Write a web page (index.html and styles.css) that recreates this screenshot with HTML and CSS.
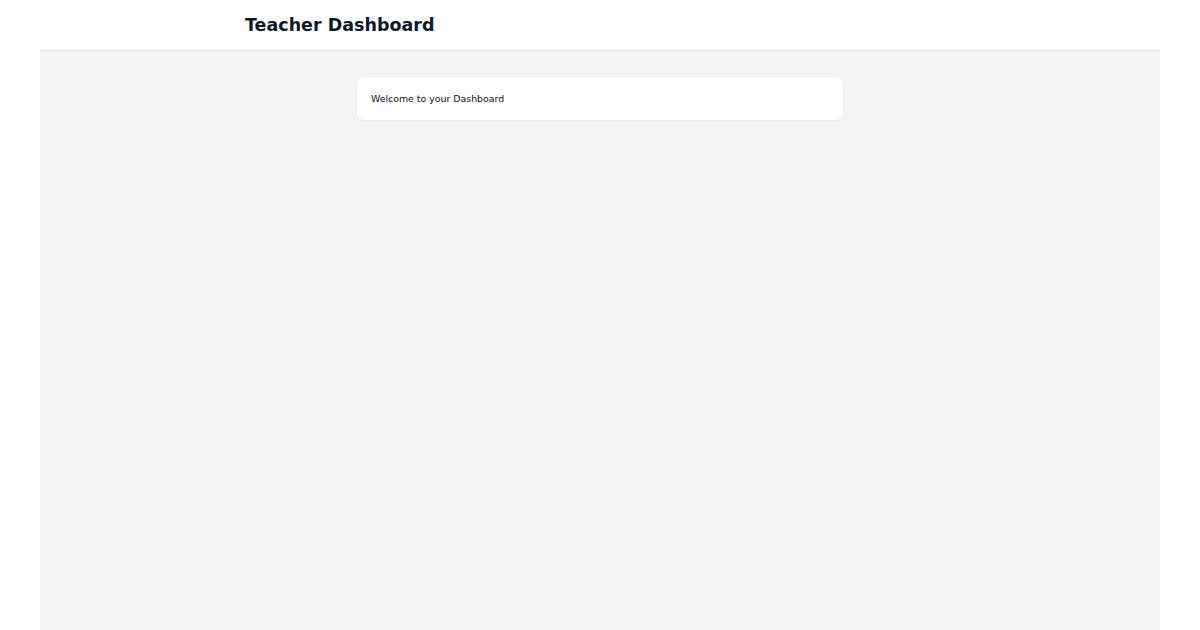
FILE: index.html
```html
<!DOCTYPE html>
<html lang="en">
<head>
<meta charset="utf-8">
<title>Teacher Dashboard</title>
<link rel="stylesheet" href="styles.css">
</head>
<body>
<div class="app">
  <header class="topbar">
    <h1 class="title">Teacher Dashboard</h1>
  </header>
  <main class="main">
    <section class="card">
      <p class="welcome">Welcome to your Dashboard</p>
    </section>
  </main>
</div>
</body>
</html>
```

FILE: styles.css
```css
html, body {
  margin: 0;
  padding: 0;
  height: 100%;
  background: #ffffff;
  font-family: "DejaVu Sans", sans-serif;
}
.app {
  margin: 0 40px;
  height: 100%;
  display: flex;
  flex-direction: column;
}
.topbar {
  height: 50px;
  display: flex;
  align-items: center;
  padding-left: 205px;
  padding-bottom: 1px;
  box-sizing: border-box;
}
.title {
  margin: 0;
  font-size: 17.5px;
  font-weight: bold;
  color: #111827;
}
.main {
  flex: 1;
  background: #f3f4f6;
  border-top: 1px solid #e5e7eb;
  padding-top: 27px;
  display: flex;
  flex-direction: column;
  align-items: center;
}
.card {
  width: 486px;
  height: 42px;
  box-sizing: border-box;
  background: #ffffff;
  border-radius: 6px;
  box-shadow: 0 1px 2px rgba(0, 0, 0, 0.06);
  padding: 0 14px 2px;
  display: flex;
  align-items: center;
}
.welcome {
  margin: 0;
  font-size: 9.4px;
  color: #111111;
}
```
